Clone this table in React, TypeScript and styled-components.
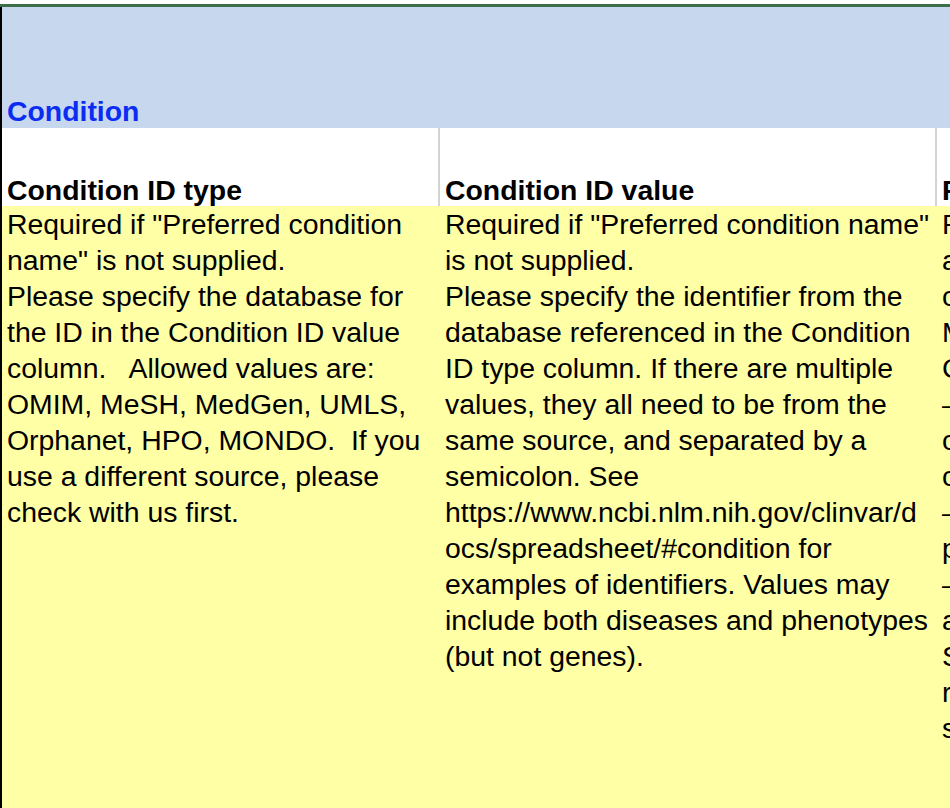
import React from "react"
import styled, { createGlobalStyle } from "styled-components"

const GlobalStyle = createGlobalStyle`
  html, body {
    margin: 0;
    padding: 0;
    background: #ffffff;
    overflow: hidden;
  }
`

const Page = styled.div`
  display: flex;
  flex-direction: column;
  height: 100vh;
  padding-top: 4px;
  box-sizing: border-box;
  font-family: "Liberation Sans", Arial, Helvetica, sans-serif;
  font-size: 28.4px;
  color: #000000;
`

const TopRule = styled.div`
  height: 3px;
  background: #3c6f49;
  flex: none;
`

const Sheet = styled.div`
  flex: 1;
  display: flex;
  flex-direction: column;
  border-left: 2px solid #000000;
  min-width: 1437px;
`

const SectionBand = styled.div`
  height: 121px;
  background: #c6d7ee;
  display: flex;
  align-items: flex-end;
  padding: 0 0 1px 5px;
  box-sizing: border-box;
  flex: none;
`

const SectionTitle = styled.span`
  font-weight: bold;
  color: #0b2cf3;
  line-height: 32px;
`

const Row = styled.div<{ $fill: string; $grow?: boolean }>`
  display: grid;
  grid-template-columns: 438px 497px 500px;
  background: ${(p) => p.$fill};
  flex: ${(p) => (p.$grow ? "1" : "none")};
`

const HeaderCell = styled.div`
  height: 78px;
  box-sizing: border-box;
  border-right: 2px solid #d3d3d3;
  display: flex;
  align-items: flex-end;
  padding-left: 5px;
  font-weight: bold;
  line-height: 32px;
  white-space: nowrap;
`

const NoteCell = styled.div`
  padding-left: 5px;
  line-height: 36px;
  white-space: pre;
`

const columns = [
  {
    title: "Condition ID type",
    note: [
      'Required if "Preferred condition',
      'name" is not supplied.',
      "Please specify the database for",
      "the ID in the Condition ID value",
      "column.   Allowed values are:",
      "OMIM, MeSH, MedGen, UMLS,",
      "Orphanet, HPO, MONDO.  If you",
      "use a different source, please",
      "check with us first.",
    ],
  },
  {
    title: "Condition ID value",
    note: [
      'Required if "Preferred condition name"',
      "is not supplied.",
      "Please specify the identifier from the",
      "database referenced in the Condition",
      "ID type column. If there are multiple",
      "values, they all need to be from the",
      "same source, and separated by a",
      "semicolon. See",
      "https://www.ncbi.nlm.nih.gov/clinvar/d",
      "ocs/spreadsheet/#condition for",
      "examples of identifiers. Values may",
      "include both diseases and phenotypes",
      "(but not genes).",
    ],
  },
  {
    title: "Preferred condition name",
    note: [
      'Required if "Condition ID type" and',
      'and "Condition ID value" are not',
      "considered. Use the preferred name",
      "MedGen uses for the condition.",
      "Combined conditions may be given",
      "– as one name per row, or",
      "can be listed separately:",
      "combined in one cell",
      "– for a single condition, use its",
      "preferred name",
      "– for multiple conditions, separate",
      "all names by a semicolon.",
      "See the documentation for",
      "rules on naming and",
      "special cases.",
    ],
  },
]

export default function App() {
  return (
    <>
      <GlobalStyle />
      <Page>
        <TopRule />
        <Sheet>
          <SectionBand>
            <SectionTitle>Condition</SectionTitle>
          </SectionBand>
          <Row $fill="#ffffff">
            {columns.map((c) => (
              <HeaderCell key={c.title}>{c.title}</HeaderCell>
            ))}
          </Row>
          <Row $fill="#ffffa6" $grow>
            {columns.map((c) => (
              <NoteCell key={c.title}>{c.note.join("\n")}</NoteCell>
            ))}
          </Row>
        </Sheet>
      </Page>
    </>
  )
}
